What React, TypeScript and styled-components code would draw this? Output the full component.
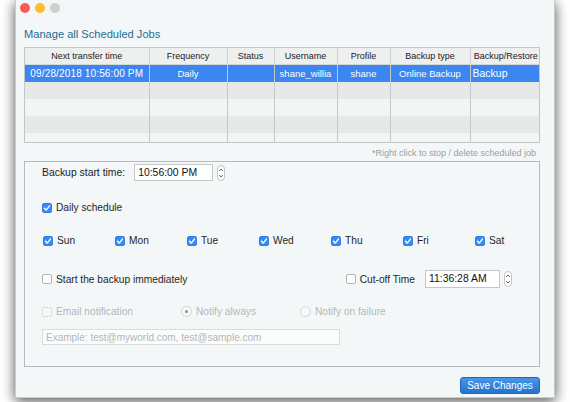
import React from 'react';
import styled, { createGlobalStyle } from 'styled-components';

const GlobalStyle = createGlobalStyle`
  html, body { margin: 0; padding: 0; background: #ffffff; }
  body { font-family: "Liberation Sans", Arial, sans-serif; color: #222; }
`;

const columns = [
  { title: 'Next transfer time', width: 124 },
  { title: 'Frequency', width: 78 },
  { title: 'Status', width: 47 },
  { title: 'Username', width: 63 },
  { title: 'Profile', width: 53 },
  { title: 'Backup type', width: 80 },
  { title: 'Backup/Restore', width: 71 }
];

const job = ['09/28/2018 10:56:00 PM', 'Daily', '', 'shane_willia', 'shane', 'Online Backup', 'Backup'];
const days = ['Sun', 'Mon', 'Tue', 'Wed', 'Thu', 'Fri', 'Sat'];

const CheckBox: React.FC<{ checked?: boolean; disabled?: boolean }> = ({ checked, disabled }) => (
  <Box $checked={checked} $disabled={disabled}>
    {checked && (
      <svg width="10" height="10" viewBox="0 0 10 10">
        <path d="M2.4 5.3 L4.2 7.1 L7.6 2.9" fill="none" stroke="#fff" strokeWidth="1.4" strokeLinecap="round" strokeLinejoin="round" />
      </svg>
    )}
  </Box>
);

const Stepper: React.FC = () => (
  <StepperBox>
    <svg width="6" height="14" viewBox="0 0 6 14">
      <path d="M1.2 5 L3 3 L4.8 5" fill="none" stroke="#555" strokeWidth="0.9" />
      <path d="M1.2 9 L3 11 L4.8 9" fill="none" stroke="#555" strokeWidth="0.9" />
    </svg>
  </StepperBox>
);

const App: React.FC = () => {
  return (
    <Page>
      <GlobalStyle />
      <Window>
        <TitleBar>
          <Light color="#fc5b57" />
          <Light color="#fdbb2e" />
          <Light color="#cfcfcf" />
        </TitleBar>
        <Content>
          <Heading>Manage all Scheduled Jobs</Heading>
          <TableWrap>
            <Table>
              <colgroup>
                {columns.map((c) => (
                  <col key={c.title} style={{ width: c.width }} />
                ))}
              </colgroup>
              <thead>
                <tr>
                  {columns.map((c) => (
                    <Th key={c.title}>{c.title}</Th>
                  ))}
                </tr>
              </thead>
              <tbody>
                <Tr $selected>
                  {job.map((v, i) => (
                    <Td key={i} $left={i === 6} $wide={i === 0}>
                      {v}
                    </Td>
                  ))}
                </Tr>
                {[0, 1, 2, 3].map((r) => (
                  <Tr key={r} $shade={r % 2 === 0}>
                    {columns.map((c) => (
                      <Td key={c.title} />
                    ))}
                  </Tr>
                ))}
              </tbody>
            </Table>
          </TableWrap>
          <Note>*Right click to stop / delete scheduled job</Note>
          <Group>
            <Row>
              <Label>Backup start time:</Label>
              <TimeField $width={79}>10:56:00 PM</TimeField>
              <Stepper />
            </Row>
            <Row $gap={18}>
              <CheckItem>
                <CheckBox checked />
                Daily schedule
              </CheckItem>
            </Row>
            <DaysRow>
              {days.map((d) => (
                <CheckItem key={d}>
                  <CheckBox checked />
                  {d}
                </CheckItem>
              ))}
            </DaysRow>
            <Row $gap={21} $height={18}>
              <CheckItem>
                <CheckBox />
                Start the backup immediately
              </CheckItem>
              <CutOff>
                <CheckItem>
                  <CheckBox />
                  Cut-off Time
                </CheckItem>
                <TimeField $width={75} $height={18}>11:36:28 AM</TimeField>
                <Stepper />
              </CutOff>
            </Row>
            <NotifyRow>
              <CheckItem $disabled>
                <CheckBox disabled />
                Email notification
              </CheckItem>
              <CheckItem $disabled>
                <Radio $on />
                Notify always
              </CheckItem>
              <CheckItem $disabled>
                <Radio />
                Notify on failure
              </CheckItem>
            </NotifyRow>
            <EmailField placeholder="Example: test@myworld.com, test@sample.com" disabled />
          </Group>
          <Footer>
            <SaveButton>Save Changes</SaveButton>
          </Footer>
        </Content>
      </Window>
    </Page>
  );
};

export default App;

const Page = styled.div`
  width: 570px;
  height: 402px;
  padding: 0 15px;
  box-sizing: border-box;
  overflow: hidden;
`;

const Window = styled.div`
  height: 398px;
  background: #f4f7f8;
  border: 1px solid #c9cbcc;
  border-top: none;
  box-sizing: border-box;
  box-shadow: 0 4px 12px rgba(0, 0, 0, 0.55), 0 0 12px rgba(0, 0, 0, 0.2);
`;

const TitleBar = styled.div`
  height: 16px;
  display: flex;
  align-items: center;
  gap: 5px;
  padding-left: 4px;
`;

const Light = styled.span<{ color: string }>`
  width: 10px;
  height: 10px;
  border-radius: 50%;
  background: ${({ color }) => color};
`;

const Content = styled.div`
  padding: 0 14px 0 8px;
`;

const Heading = styled.h1`
  margin: 11px 0 0;
  font-size: 11.1px;
  line-height: 14px;
  font-weight: normal;
  color: #236d93;
`;

const TableWrap = styled.div`
  margin-top: 6px;
  height: 96px;
  border: 1px solid #c3c5c6;
  box-sizing: border-box;
  overflow: hidden;
  background: #f3f5f5;
`;

const Table = styled.table`
  width: 100%;
  border-collapse: collapse;
  table-layout: fixed;
`;

const Th = styled.th`
  height: 16px;
  padding: 0;
  font-size: 9px;
  font-weight: normal;
  color: #222;
  background: #eeefef;
  border-right: 1px solid #cfd1d2;
  border-bottom: 1px solid #d6d8d8;
  &:last-child { border-right: none; }
`;

const Tr = styled.tr<{ $selected?: boolean; $shade?: boolean }>`
  height: 17px;
  background: ${({ $selected, $shade }) => ($selected ? '#3b86f0' : $shade ? '#e7e9e9' : '#f3f5f5')};
  color: ${({ $selected }) => ($selected ? '#ffffff' : '#222')};
`;

const Td = styled.td<{ $left?: boolean; $wide?: boolean }>`
  padding: 0 ${({ $left }) => ($left ? '2px' : '0')};
  font-size: ${({ $left, $wide }) => ($left ? '10.5px' : $wide ? '10px' : '9.5px')};
  letter-spacing: ${({ $wide }) => ($wide ? '0.15px' : '0')};
  text-align: ${({ $left }) => ($left ? 'left' : 'center')};
  white-space: nowrap;
  overflow: hidden;
  border-right: 1px solid #c6c8c9;
  &:last-child { border-right: none; }
`;

const Note = styled.div`
  margin-top: 4px;
  padding-right: 4px;
  text-align: right;
  font-size: 9px;
  line-height: 12px;
  color: #9b9d9e;
`;

const Group = styled.div`
  margin-top: 2px;
  height: 206px;
  box-sizing: border-box;
  border: 1px solid #b7b9ba;
  padding: 2px 27px 0 17px;
  display: flex;
  flex-direction: column;
`;

const Row = styled.div<{ $gap?: number; $height?: number }>`
  display: flex;
  align-items: center;
  height: ${({ $height }) => $height ?? 17}px;
  margin-top: ${({ $gap }) => $gap ?? 0}px;
`;

const Label = styled.span`
  font-size: 10.4px;
  color: #1c1c1c;
  margin-right: 9px;
`;

const TimeField = styled.div<{ $width: number; $height?: number }>`
  width: ${({ $width }) => $width}px;
  height: ${({ $height }) => $height ?? 17}px;
  box-sizing: border-box;
  border: 1px solid #c4c6c7;
  background: #ffffff;
  font-size: 10.4px;
  line-height: ${({ $height }) => ($height ?? 17) - 2}px;
  padding-left: 3px;
  color: #111;
`;

const StepperBox = styled.span`
  margin-left: 4px;
  width: 8px;
  height: 16px;
  box-sizing: border-box;
  border: 1px solid #c2c4c5;
  border-radius: 4px;
  background: #fff;
  display: flex;
  align-items: center;
  justify-content: center;
`;

const CheckItem = styled.label<{ $disabled?: boolean }>`
  display: flex;
  align-items: center;
  gap: 4px;
  font-size: 10.2px;
  color: ${({ $disabled }) => ($disabled ? '#b4b7b8' : '#1f1f1f')};
  white-space: nowrap;
`;

const Box = styled.span<{ $checked?: boolean; $disabled?: boolean }>`
  width: 10px;
  height: 10px;
  box-sizing: border-box;
  border-radius: 2px;
  display: inline-flex;
  background: ${({ $checked, $disabled }) => ($checked ? '#3a8bf6' : $disabled ? '#f7f8f8' : '#ffffff')};
  border: 1px solid ${({ $checked, $disabled }) => ($checked ? '#2f7de6' : $disabled ? '#dadcdd' : '#b3b5b6')};
  svg { margin: -1px; }
`;

const Radio = styled.span<{ $on?: boolean }>`
  width: 11px;
  height: 11px;
  box-sizing: border-box;
  border-radius: 50%;
  border: 1px solid #d3d5d6;
  background: #f8f9f9;
  display: inline-flex;
  align-items: center;
  justify-content: center;
  &::after {
    content: '';
    width: 3px;
    height: 3px;
    border-radius: 50%;
    background: ${({ $on }) => ($on ? '#8c8f90' : 'transparent')};
  }
`;

const DaysRow = styled.div`
  display: grid;
  grid-template-columns: repeat(6, 72px) auto;
  align-items: center;
  height: 17px;
  margin-top: 16px;
  padding-left: 1px;
`;

const CutOff = styled.div`
  margin-left: auto;
  display: flex;
  align-items: center;
  ${CheckItem} { margin-right: 10px; }
`;

const NotifyRow = styled.div`
  display: grid;
  grid-template-columns: 139px 119px auto;
  align-items: center;
  height: 17px;
  margin-top: 15px;
`;

const EmailField = styled.input`
  margin-top: 9px;
  width: 298px;
  height: 16px;
  box-sizing: border-box;
  border: 1px solid #d9dbdc;
  background: #fbfcfc;
  padding: 0 3px;
  font-family: "Liberation Sans", Arial, sans-serif;
  font-size: 10px;
  &::placeholder { color: #b3b6b7; }
`;

const Footer = styled.div`
  display: flex;
  justify-content: flex-end;
  margin-top: 10px;
`;

const SaveButton = styled.button`
  width: 80px;
  height: 17px;
  padding: 0;
  border: 1px solid #1d67b8;
  border-radius: 3px;
  background: linear-gradient(#4997e4, #2373cc);
  color: #ffffff;
  font-family: "Liberation Sans", Arial, sans-serif;
  font-size: 10px;
`;
